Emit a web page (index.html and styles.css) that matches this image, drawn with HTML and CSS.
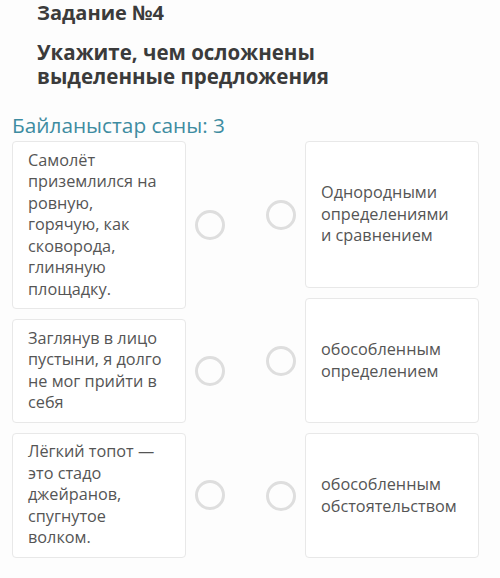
FILE: index.html
```html
<!DOCTYPE html>
<html lang="ru">
<head>
<meta charset="utf-8">
<link rel="stylesheet" href="styles.css">
</head>
<body>
<div class="page">
  <div class="head">
    <div class="task">Задание №4</div>
    <div class="question">Укажите, чем осложнены выделенные предложения</div>
  </div>
  <div class="count">Байланыстар саны: 3</div>
  <div class="match">
    <div class="col">
      <div class="item">
        <div class="card left">Самолёт приземлился на ровную, горячую, как сковорода, глиняную площадку.</div>
        <span class="radio"></span>
      </div>
      <div class="item">
        <div class="card left">Заглянув в лицо пустыни, я долго не мог прийти в себя</div>
        <span class="radio"></span>
      </div>
      <div class="item">
        <div class="card left">Лёгкий топот — это стадо джейранов, спугнутое волком.</div>
        <span class="radio"></span>
      </div>
    </div>
    <div class="col">
      <div class="item">
        <span class="radio"></span>
        <div class="card right tall">Однородными определениями и сравнением</div>
      </div>
      <div class="item">
        <span class="radio"></span>
        <div class="card right">обособленным определением</div>
      </div>
      <div class="item">
        <span class="radio"></span>
        <div class="card right">обособленным обстоятельством</div>
      </div>
    </div>
  </div>
</div>
</body>
</html>
```
FILE: styles.css
```css
html, body {
  margin: 0;
  padding: 0;
  background: #fdfdfd;
}
body {
  font-family: "Open Sans", "Noto Sans", sans-serif;
  color: #3b3b3b;
}
.page {
  width: 500px;
  height: 578px;
  overflow: hidden;
}
.head {
  padding-left: 37px;
  width: 320px;
}
.task {
  font-size: 20px;
  font-weight: 700;
  line-height: 26px;
}
.question {
  margin-top: 13.5px;
  font-size: 20.5px;
  font-weight: 700;
  line-height: 24px;
}
.count {
  margin-top: 24.5px;
  padding-left: 12px;
  font-size: 20.8px;
  line-height: 26px;
  color: #3e8ca1;
}
.match {
  margin-top: 3px;
  padding: 0 12px;
  display: grid;
  grid-template-columns: 213px 213px;
  column-gap: 41px;
}
.col {
  display: flex;
  flex-direction: column;
  gap: 10px;
}
.item {
  display: flex;
  align-items: center;
  gap: 9px;
}
.card {
  box-sizing: border-box;
  width: 174px;
  background: #fff;
  border: 1px solid #e8e8e8;
  border-radius: 4px;
  font-size: 16.25px;
  line-height: 21.6px;
  color: #555;
  padding: 7.5px 22px 7.5px 15px;
}
.card.right {
  height: 125px;
  display: flex;
  align-items: center;
  padding: 0 17px 0 15px;
}
.card.right.tall {
  height: 147px;
}
.radio {
  flex: none;
  box-sizing: border-box;
  width: 30px;
  height: 30px;
  border: 3px solid #dedede;
  border-radius: 50%;
}
```
